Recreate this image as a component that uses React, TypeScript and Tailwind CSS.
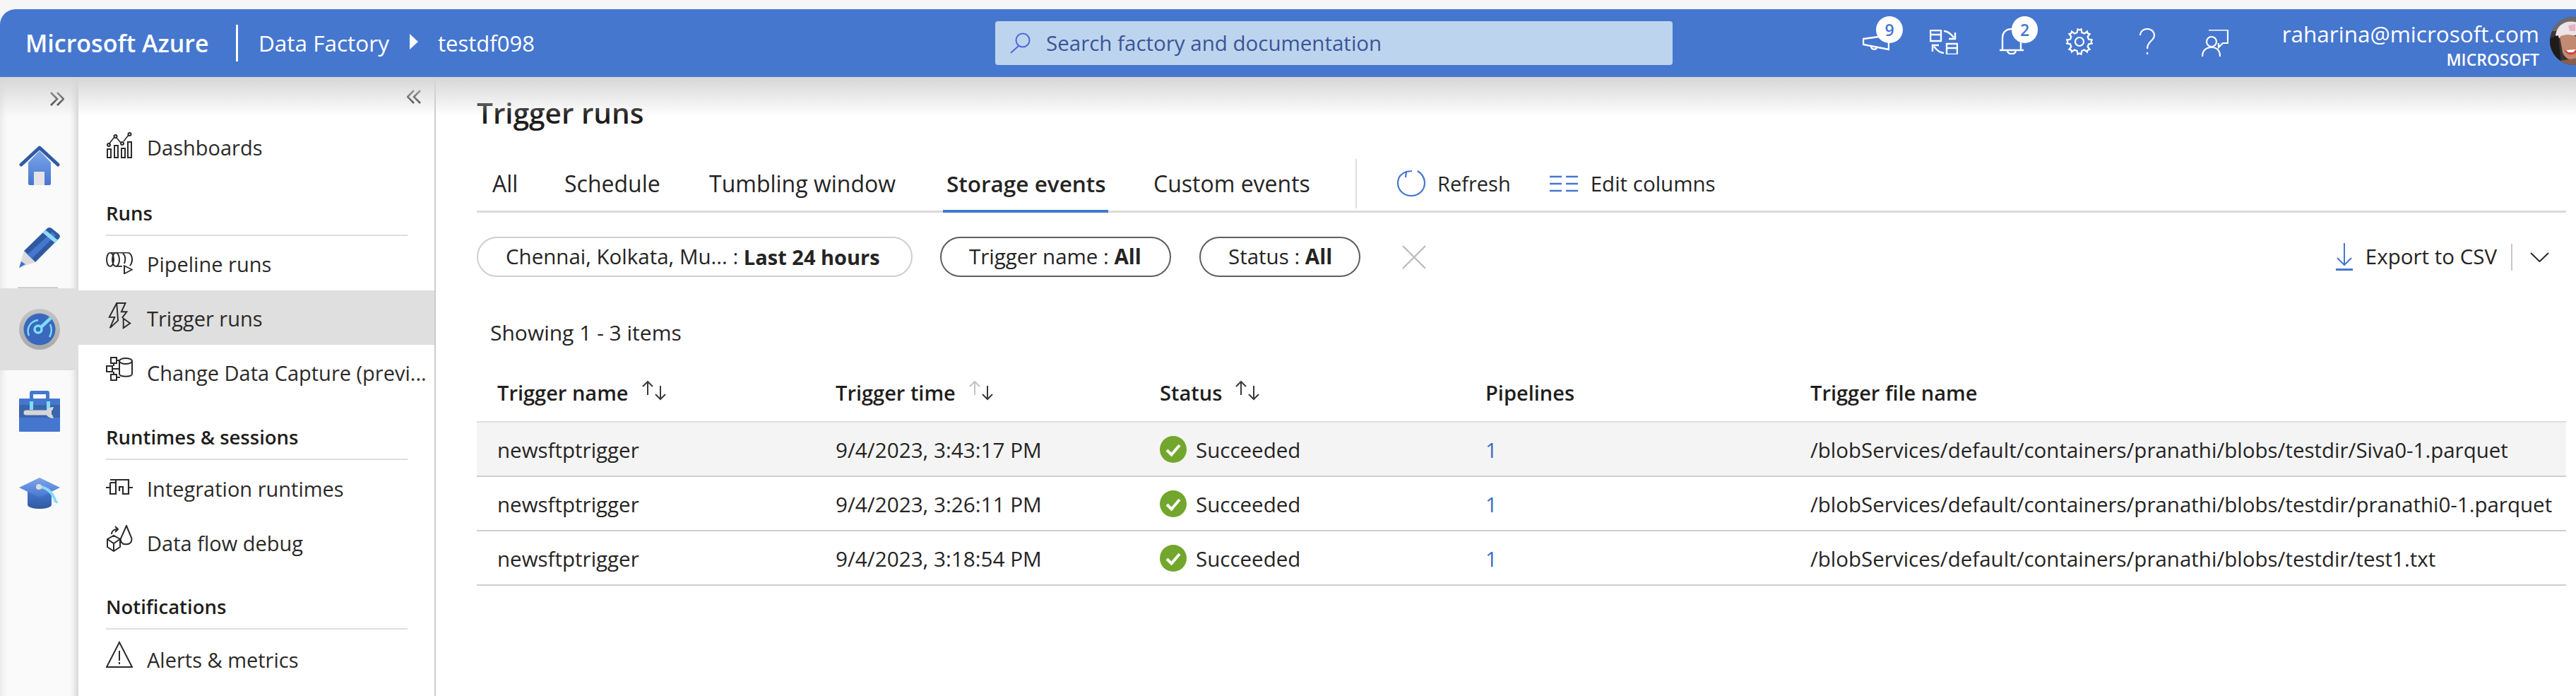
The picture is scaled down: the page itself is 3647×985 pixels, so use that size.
import React from "react";

const gearPath = (() => {
  const pts: string[] = [];
  const n = 8;
  for (let i = 0; i < n; i++) {
    const a = (i / n) * Math.PI * 2 - Math.PI / 2;
    const s = Math.PI / n;
    const p = (r: number, t: number) => `${(19 + r * Math.cos(t)).toFixed(1)} ${(19 + r * Math.sin(t)).toFixed(1)}`;
    pts.push(`${i === 0 ? "M" : "L"}${p(13.5, a - s * 0.62)}`);
    pts.push(`L${p(18, a - s * 0.36)}`);
    pts.push(`Q${p(15.5, a)} ${p(18, a + s * 0.36)}`);
    pts.push(`L${p(13.5, a + s * 0.62)}`);
  }
  return pts.join(" ") + "Z";
})();

const D = "#2b2a29";

const DashIcon = () => (
  <svg width="36" height="37" viewBox="0 0 36 37" fill="none" stroke={D} strokeWidth="2">
    <rect x="1" y="24" width="5" height="12" />
    <rect x="11" y="19" width="5" height="17" />
    <rect x="21" y="23" width="5" height="13" />
    <rect x="30" y="14" width="5" height="22" />
    <path d="M3 17 L11 7 M14 8 L20 15 M24 13 L31 4" strokeWidth="1.6" />
    <circle cx="3" cy="18" r="2" /><circle cx="12.5" cy="6" r="2" /><circle cx="22" cy="16" r="2" /><circle cx="32.5" cy="3" r="2" />
  </svg>
);
const PipeIcon = () => (
  <svg width="38" height="31" viewBox="0 0 38 39" preserveAspectRatio="none" fill="none" stroke={D} strokeWidth="2">
    <ellipse cx="6" cy="13" rx="5" ry="12" />
    <ellipse cx="14" cy="13" rx="5" ry="12" />
    <path d="M6 1 H31 C35 1 37 7 37 13 C37 17 36 21 34 24 M14 25 H23 M24 2 C28 6 28 14 26 20" />
    <path d="M26 24 L37 31 L26 38 Z" />
  </svg>
);
const BoltIcon = () => (
  <svg width="34" height="38" viewBox="0 0 34 40" fill="none" stroke={D} strokeWidth="2">
    <path d="M13 1 H26 L20 14 H28 L21 23 M15 27 L3 38 L10 22 H2 L13 1Z" />
    <path d="M23 24 L33 31 L23 38Z" />
  </svg>
);
const CdcIcon = () => (
  <svg width="38" height="34" viewBox="0 0 38 34" fill="none" stroke={D} strokeWidth="2">
    <rect x="7" y="1" width="8" height="8" />
    <rect x="1" y="13" width="8" height="8" />
    <rect x="7" y="25" width="8" height="8" />
    <path d="M11 9 V13 M9 17 H19 M11 21 V25 M15 29 H20 M15 5 H20" />
    <ellipse cx="28" cy="6" rx="9" ry="4" />
    <path d="M19 6 V24 C19 29 37 29 37 24 V6" />
  </svg>
);
const IrIcon = () => (
  <svg width="38" height="24" viewBox="0 0 38 24" fill="none" stroke={D} strokeWidth="2.2">
    <path d="M0 12 H6 M32 12 H38" />
    <path d="M6 5 V21 H14 V5 H6 M6 1 H32 V21 H24 V11 H19 V17" />
    <path d="M14 1 V5" />
  </svg>
);
const FlowIcon = () => (
  <svg width="38" height="38" viewBox="0 0 38 38" fill="none" stroke={D} strokeWidth="2">
    <path d="M29 1 L36 18 C38 25 32 28 28 27 C24 28 20 24 21 19 Z" />
    <path d="M2 20 L11 15 L20 20 V31 L11 37 L2 31 Z M2 20 L11 26 L20 20 M11 26 V37" />
    <path d="M8 13 C8 9 11 6 16 6 M13 2 L17 6 L13 10" />
  </svg>
);
const AlertIcon = () => (
  <svg width="38" height="38" viewBox="0 0 38 38" fill="none" stroke={D} strokeWidth="2">
    <path d="M19 2 L37 37 H1 Z" />
    <path d="M19 14 V28 M19 30 V33" />
  </svg>
);

const HomeIcon = () => (
  <svg width="58" height="56" viewBox="0 0 58 56">
    <defs><linearGradient id="h1" x1="0" y1="0" x2="0" y2="1"><stop offset="0" stopColor="#7ea5ea" /><stop offset="1" stopColor="#4677cf" /></linearGradient></defs>
    <path d="M13 24 L29 7 L45 24 V54 Q45 56 43 56 H15 Q13 56 13 54Z" fill="url(#h1)" />
    <path d="M3 27 L29 3 L55 27" fill="none" stroke="#2f5ba3" strokeWidth="5" strokeLinecap="round" strokeLinejoin="round" />
    <rect x="21" y="37" width="15" height="19" fill="#e4e4e8" />
  </svg>
);
const PencilIcon = () => (
  <svg width="58" height="58" viewBox="0 0 58 58">
    <path d="M7 34 L23 50 L0 58Z" fill="#dcdcdc" />
    <path d="M0 58 L3 49 L9 53Z" fill="#3f73cf" />
    <path d="M7 34 L40 2 Q43 0 46 2 L56 10 Q59 13 57 16 L23 50Z" fill="#2f5a9f" />
    <path d="M12 39 L47 7 L52 12 L18 45Z" fill="#4677cf" />
    <path d="M33 8 L38 5 L55 19 L51 23Z" fill="#8fdcf6" />
  </svg>
);
const MonitorIcon = () => (
  <svg width="58" height="58" viewBox="0 0 58 58" fill="none">
    <defs><linearGradient id="m1" x1="0" y1="0" x2="0" y2="1"><stop offset="0" stopColor="#c4c4c4" /><stop offset="1" stopColor="#a9a9a9" /></linearGradient></defs>
    <circle cx="29" cy="29" r="29" fill="url(#m1)" />
    <circle cx="29" cy="29" r="22.5" fill="#3a68bd" />
    <path d="M14 38 C10 28 15 18 27 16" stroke="#7fdcf7" strokeWidth="2.4" />
    <path d="M44 22 C47 29 46 35 43 40" stroke="#7fdcf7" strokeWidth="2.4" />
    <circle cx="27" cy="29" r="5" stroke="#7fdcf7" strokeWidth="3.5" />
    <path d="M31 26 L45 13" stroke="#7fdcf7" strokeWidth="4.5" />
  </svg>
);
const ToolIcon = () => (
  <svg width="58" height="58" viewBox="0 0 58 58">
    <path d="M15 12 V3 Q15 0 18 0 H40 Q43 0 43 3 V12" fill="#4677cf" />
    <rect x="20" y="5" width="18" height="8" fill="#fff" />
    <rect x="0" y="11" width="58" height="47" rx="1" fill="#4677cf" />
    <path d="M0 20 H58 V38 H0Z" fill="#3a65ad" />
    <rect x="15" y="15" width="5" height="12" fill="#7fdcf7" />
    <rect x="39" y="15" width="5" height="12" fill="#7fdcf7" />
    <path d="M10 31 H35 M35 31 H42" stroke="#d6d6d6" strokeWidth="7" strokeLinecap="round" />
    <path d="M49 23 C41 23 38 28 38 31 C38 35 42 39 49 39 L47 34 H46 V28 H47Z" fill="#d6d6d6" />
  </svg>
);
const CapIcon = () => (
  <svg width="58" height="44" viewBox="0 0 58 44">
    <defs>
      <linearGradient id="c1" x1="0" y1="0" x2="0" y2="1"><stop offset="0" stopColor="#4677cf" /><stop offset="1" stopColor="#2f5a9f" /></linearGradient>
      <linearGradient id="c2" x1="0" y1="0" x2="0" y2="1"><stop offset="0" stopColor="#7ea5ea" /><stop offset="1" stopColor="#4677cf" /></linearGradient>
    </defs>
    <path d="M12 20 H46 V38 C46 46 12 46 12 38Z" fill="url(#c1)" />
    <path d="M29 0 L58 14 L29 28 L0 14Z" fill="url(#c2)" />
    <path d="M28 13 C38 13 48 20 52 35" fill="none" stroke="#86dcf7" strokeWidth="4" />
    <path d="M50 34 L55 33 L54 37Z" fill="#86dcf7" />
    <circle cx="28" cy="13" r="4" fill="#dcdcdc" />
  </svg>
);

const SortIcon = ({ lightUp }: { lightUp?: boolean }) => (
  <svg width="36" height="28" viewBox="0 0 36 28" fill="none" strokeWidth="2" className="ml-[18px] mb-[5px]">
    <path d="M9 20 V1 M2 8 L9 1 L16 8" stroke={lightUp ? "#c4c4c4" : "#3a3938"} />
    <path d="M27 7 V26 M20 19 L27 26 L34 19" stroke="#3a3938" />
  </svg>
);
const CheckIcon = () => (
  <svg width="38" height="38" viewBox="0 0 38 38" className="shrink-0">
    <circle cx="19" cy="19" r="19" fill="#73a62c" />
    <path d="M10 20 L16.5 26.5 L28 13" fill="none" stroke="#fff" strokeWidth="4" />
  </svg>
);

const NavItem = ({ icon, label, active, tw = "pt-[4px]", iw = "" }: { icon: React.ReactNode; label: string; active?: boolean; tw?: string; iw?: string }) => (
  <div className={`h-[77px] flex items-center pl-[39px] whitespace-nowrap ${active ? "bg-[#dfdfdf]" : ""}`}>
    <span className={`w-[38px] flex justify-center shrink-0 ${iw}`}>{icon}</span>
    <span className={`ml-[20px] text-[#2b2a29] ${tw}`}>{label}</span>
  </div>
);
const Section = ({ label }: { label: string }) => (
  <div className="h-[86px] flex flex-col justify-end pl-[39px]">
    <div className="w-[427px] border-b-2 border-[#dedede] pb-[10px] text-[27.5px] font-semibold text-[#1f1e1d] leading-[40px]">{label}</div>
  </div>
);

const rows = [
  ["9/4/2023, 3:43:17 PM", "/blobServices/default/containers/pranathi/blobs/testdir/Siva0-1.parquet"],
  ["9/4/2023, 3:26:11 PM", "/blobServices/default/containers/pranathi/blobs/testdir/pranathi0-1.parquet"],
  ["9/4/2023, 3:18:54 PM", "/blobServices/default/containers/pranathi/blobs/testdir/test1.txt"],
];
const gridCols = "grid grid-cols-[508px_459px_461px_460px_1fr] items-center";

export default function App() {
  return (
    <div className="w-[3647px] h-[985px] overflow-hidden flex flex-col bg-[#f6f6f6] text-[29px] text-[#252423] font-['Open_Sans',sans-serif]">
      <div className="h-[13px] shrink-0" />
      <header className="relative z-20 h-[96px] shrink-0 bg-[#4677cf] rounded-tl-[22px] flex items-center text-white">
        <div className="w-[1409px] shrink-0 flex items-center">
          <span className="ml-[36px] w-[298px] text-[34px] font-semibold whitespace-nowrap">Microsoft Azure</span>
          <span className="w-[3px] h-[52px] bg-white" />
          <span className="ml-[29px] w-[214px] text-[31.5px] whitespace-nowrap">Data Factory</span>
          <svg width="12" height="22" viewBox="0 0 12 22" fill="#fff" className="mb-[4px]"><path d="M0 0 L12 11 L0 22Z" /></svg>
          <span className="ml-[28px] text-[31px]">testdf098</span>
        </div>
        <div className="w-[959px] h-[62px] shrink-0 bg-[#bdd4ee] rounded-[4px] flex items-center pl-[20px]">
          <svg width="30" height="30" viewBox="0 0 30 30" fill="none" stroke="#4e67d8" strokeWidth="2"><circle cx="19" cy="11" r="9.5" /><path d="M13 19 L2 29" /></svg>
          <span className="ml-[22px] text-[#3a5596] text-[29.5px]">Search factory and documentation</span>
        </div>
        <div className="relative ml-[269px]">
          <svg width="38" height="22" viewBox="0 0 38 22" fill="none" stroke="#fff" strokeWidth="2.4" className="block">
            <path d="M1 5 L37 0 V20 L1 13Z" />
            <path d="M12 15 C12 21 20 21 20 17" />
          </svg>
          <span className="absolute -top-[27px] left-[19px] w-[38px] h-[38px] rounded-full bg-white text-[#4677cf] text-[23px] font-semibold flex items-center justify-center">9</span>
        </div>
        <div className="ml-[57px] mb-[4px]">
          <svg width="40" height="35" viewBox="0 0 40 35" fill="none" stroke="#fff" strokeWidth="2.4" className="block">
            <path d="M1 1 H16 V16 H1Z M1 7 H16" />
            <path d="M24 35 V20 H39 V35Z M24 26 H39" />
            <path d="M20 2 C26 2 30 6 34 11 M36 4 V13 H27" />
            <path d="M20 33 C14 33 10 29 6 24 M4 31 V22 H13" />
          </svg>
        </div>
        <div className="relative ml-[59px] mb-[5px]">
          <svg width="34" height="37" viewBox="0 0 34 37" fill="none" stroke="#fff" strokeWidth="2.4" className="block">
            <path d="M4 30 V14 C4 5 10 1 17 1 C24 1 30 5 30 14 V30" />
            <path d="M0 31 H34" />
            <path d="M11 31 C11 38 23 38 23 31" />
          </svg>
          <span className="absolute -top-[17px] left-[17px] w-[37px] h-[38px] rounded-full bg-white text-[#4677cf] text-[23px] font-semibold flex items-center justify-center">2</span>
        </div>
        <div className="ml-[60px] mb-[4px]">
          <svg width="38" height="38" viewBox="0 0 38 38" fill="none" stroke="#fff" strokeWidth="2.2" className="block">
            <path d={gearPath} />
            <circle cx="19" cy="19" r="6" />
          </svg>
        </div>
        <div className="ml-[66px] mb-[4px]">
          <svg width="22" height="38" viewBox="0 0 22 38" fill="none" stroke="#fff" strokeWidth="2.2" className="block">
            <path d="M1 10 C1 4 6 1 11 1 C17 1 21 5 21 10 C21 18 11 18 11 29" />
            <path d="M11 34 V37" />
          </svg>
        </div>
        <div className="ml-[66px]">
          <svg width="38" height="38" viewBox="0 0 38 38" fill="none" stroke="#fff" strokeWidth="2.2" className="block">
            <path d="M10 0.5 H37 V19 H30 L24 25 V19" />
            <circle cx="14" cy="17" r="7" />
            <path d="M1 38 C1 29 7 25 14 25 C21 25 26 29 26 38" />
          </svg>
        </div>
        <div className="flex-1 flex flex-col items-end whitespace-nowrap mt-[6px]">
          <span className="text-[31.5px] leading-[40px]">raharina@microsoft.com</span>
          <span className="text-[23px] font-semibold leading-[32px]">MICROSOFT</span>
        </div>
        <div className="ml-[15px] w-[37px] h-[68px] overflow-hidden shrink-0 mb-[7px]">
          <svg width="68" height="68" viewBox="0 0 68 68" className="block">
            <defs><clipPath id="av"><circle cx="34" cy="34" r="34" /></clipPath></defs>
            <g clipPath="url(#av)">
              <rect width="68" height="68" fill="#3b3533" />
              <rect x="0" y="0" width="68" height="20" fill="#6f6a66" />
              <path d="M8 26 C10 10 24 3 40 8 L58 22 L14 30Z" fill="#ece4e6" />
              <path d="M26 12 L36 10 L36 20 L28 20Z" fill="#e3b3c3" />
              <path d="M14 28 C24 22 38 26 44 32 L44 52 C38 66 22 62 18 50Z" fill="#c28a70" />
              <path d="M20 46 C26 50 34 50 40 44 C38 54 26 58 20 46Z" fill="#d4413f" />
              <path d="M23 47 L37 46 L33 50 L26 50Z" fill="#fff" />
              <path d="M0 30 L12 26 L16 68 L0 68Z" fill="#1f1b1a" />
              <path d="M14 62 L40 58 L44 68 L14 68Z" fill="#8a5c4c" />
            </g>
          </svg>
        </div>
        <div className="absolute left-0 right-0 top-full h-[56px] bg-gradient-to-b from-[#d6d6d6] to-transparent pointer-events-none" />
      </header>

      <div className="flex-1 flex min-h-0 bg-white">
        <aside className="w-[111px] shrink-0 bg-[#fafafa] shadow-[inset_-12px_0_10px_-8px_#cfcfcf,inset_12px_0_10px_-10px_#e2e2e2] flex flex-col">
          <div className="h-[67px] flex justify-end pt-[21px] pr-[20px] shrink-0">
            <svg width="20" height="20" viewBox="0 0 20 20" fill="none" stroke="#1f1e1d" strokeWidth="2.6"><path d="M1 1 L10 10 L1 19 M10 1 L19 10 L10 19" /></svg>
          </div>
          <div className="h-[116px] flex items-center justify-center"><HomeIcon /></div>
          <div className="relative h-[116px] flex items-center justify-center">
            <PencilIcon />
            <span className="absolute left-[25px] bottom-0 w-[57px] h-[2px] bg-[#cfcfcf]" />
          </div>
          <div className="h-[116px] flex items-center justify-center bg-[#dfdfdf]"><MonitorIcon /></div>
          <div className="h-[116px] flex items-center justify-center"><ToolIcon /></div>
          <div className="h-[116px] flex items-center justify-center"><CapIcon /></div>
        </aside>

        <nav className="w-[506px] shrink-0 bg-white border-r-2 border-[#cccccc] flex flex-col">
          <div className="h-[62px] flex justify-end pt-[18px] pr-[19px] shrink-0">
            <svg width="20" height="20" viewBox="0 0 20 20" fill="none" stroke="#1f1e1d" strokeWidth="2.6"><path d="M10 1 L1 10 L10 19 M19 1 L10 10 L19 19" /></svg>
          </div>
          <NavItem icon={<DashIcon />} label="Dashboards" tw="pb-[2px]" iw="mb-[9px]" />
          <Section label="Runs" />
          <NavItem icon={<PipeIcon />} label="Pipeline runs" tw="pt-[2px]" />
          <NavItem icon={<BoltIcon />} label="Trigger runs" tw="pt-[2px]" iw="mb-[5px]" active />
          <NavItem icon={<CdcIcon />} label="Change Data Capture (previ..." tw="pt-[2px]" iw="mb-[9px]" />
          <Section label="Runtimes & sessions" />
          <NavItem icon={<IrIcon />} label="Integration runtimes" />
          <NavItem icon={<FlowIcon />} label="Data flow debug" iw="mb-[9px]" />
          <Section label="Notifications" />
          <NavItem icon={<AlertIcon />} label="Alerts & metrics" tw="pt-[8px]" iw="mb-[7px]" />
        </nav>

        <main className="flex-1 min-w-0 pl-[58px] pr-[14px] bg-white flex flex-col">
          <div className="h-[116px] shrink-0 pt-[22px]">
            <h1 className="text-[40.5px] font-semibold leading-[58px] text-[#1f1e1d]">Trigger runs</h1>
          </div>

          <div className="h-[76px] shrink-0 flex items-center border-b-[3px] border-[#dadada] pl-[22px] whitespace-nowrap pb-[3px]">
            <span className="w-[102px] text-[32px]">All</span>
            <span className="w-[205px] text-[32px]">Schedule</span>
            <span className="w-[336px] text-[32px]">Tumbling window</span>
            <span className="relative w-[293px] self-stretch flex items-center text-[31.5px] font-semibold">
              Storage events
              <span className="absolute -left-[5px] -bottom-[6px] w-[234px] h-[4px] bg-[#4677cf]" />
            </span>
            <span className="w-[286px] text-[32px]">Custom events</span>
            <span className="w-[2px] h-[70px] bg-[#dedede]" />
            <svg width="40" height="38" viewBox="0 0 40 38" fill="none" stroke="#4677cf" strokeWidth="2.2" className="ml-[57px] mb-[2px]">
              <path d="M13 3 C5 6 1 12 1 19 C1 29 9 37 20 37 C31 37 39 29 39 19 C39 12 35 6 29 2" />
              <path d="M12 11 L13 3 L21 2" />
            </svg>
            <span className="ml-[17px]">Refresh</span>
            <svg width="40" height="24" viewBox="0 0 40 24" fill="none" stroke="#4677cf" strokeWidth="2.4" className="ml-[55px] mb-[1px]">
              <path d="M0 2 H17 M23 2 H40 M0 12 H17 M23 12 H40 M0 22 H17 M23 22 H40" />
            </svg>
            <span className="ml-[18px] text-[29.5px]">Edit columns</span>
          </div>

          <div className="mt-[34px] h-[57px] shrink-0 flex items-center whitespace-nowrap text-[29.5px]">
            <span className="w-[617px] h-full rounded-full border-2 border-[#cfcfcf] flex items-center pl-[39px]">
              Chennai, Kolkata, Mu...&nbsp;:&nbsp;<b className="font-bold text-[29px]">Last 24 hours</b>
            </span>
            <span className="ml-[39px] w-[327px] h-full rounded-full border-2 border-[#605e5c] flex items-center pl-[39px]">
              Trigger name :&nbsp;<b className="font-bold">All</b>
            </span>
            <span className="ml-[40px] w-[228px] h-full rounded-full border-2 border-[#605e5c] flex items-center pl-[39px]">
              Status :&nbsp;<b className="font-bold">All</b>
            </span>
            <svg width="36" height="36" viewBox="0 0 36 36" fill="none" stroke="#bcbcbc" strokeWidth="2.4" className="ml-[58px]"><path d="M2 2 L34 34 M34 2 L2 34" /></svg>
            <div className="ml-auto flex items-center pr-[24px]">
              <svg width="24" height="39" viewBox="0 0 24 39" fill="none" stroke="#4677cf" strokeWidth="2"><path d="M12 0 V31 M2 21 L12 31 L22 21" /><path d="M0 37.5 H24" strokeWidth="3" /></svg>
              <span className="ml-[18px]">Export to CSV</span>
              <span className="ml-[20px] w-[2px] h-[38px] bg-[#c8c8c8]" />
              <svg width="27" height="14" viewBox="0 0 27 14" fill="none" stroke={D} strokeWidth="2" className="ml-[25px]"><path d="M1 1 L13.5 13 L26 1" /></svg>
            </div>
          </div>

          <div className="h-[128px] shrink-0 pt-[59px] pl-[19px] text-[30px] leading-[40px]">Showing 1 - 3 items</div>

          <div className={`${gridCols} h-[78px] border-b-2 border-[#dedede] font-semibold text-[#1f1e1d] shrink-0`}>
            <div className="pl-[29px] flex items-center mb-[5px]">Trigger name<SortIcon /></div>
            <div className="flex items-center mb-[5px]">Trigger time<SortIcon lightUp /></div>
            <div className="flex items-center mb-[5px]">Status<SortIcon /></div>
            <div className="mb-[5px]">Pipelines</div>
            <div className="mb-[5px]">Trigger file name</div>
          </div>
          {rows.map((r, i) => (
            <div key={i} className={`${gridCols} h-[77px] border-b-2 border-[#cfcfcf] shrink-0 text-[29.5px] ${i === 0 ? "bg-[#f4f4f4]" : ""}`}>
              <div className="pl-[29px] pt-[3px]">newsftptrigger</div>
              <div className="pt-[3px] text-[29.7px]">{r[0]}</div>
              <div className="flex items-center"><CheckIcon /><span className="ml-[13px] pt-[3px]">Succeeded</span></div>
              <div className="text-[#3a6cc4] pt-[3px]">1</div>
              <div className="whitespace-nowrap pt-[3px]">{r[1]}</div>
            </div>
          ))}
        </main>
      </div>
    </div>
  );
}
